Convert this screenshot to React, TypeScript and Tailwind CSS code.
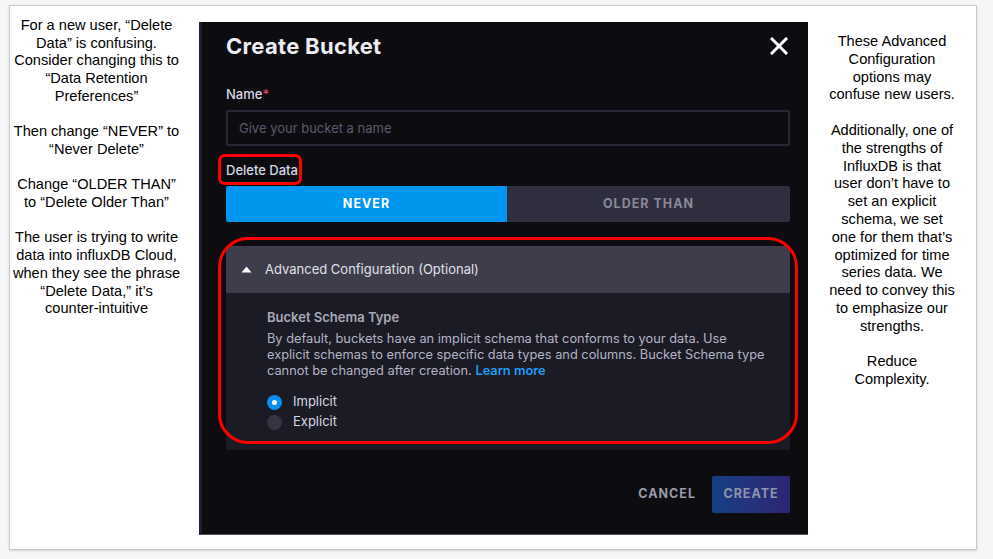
import React from "react";

const noteFont = { fontFamily: '"Liberation Sans", Arial, sans-serif' };
const uiFont = { fontFamily: 'Inter, "Noto Sans", sans-serif' };

function CloseIcon() {
  return (
    <svg width="18" height="18" viewBox="0 0 18 18">
      <path d="M2 2 L16 16 M16 2 L2 16" stroke="#ffffff" strokeWidth="3" strokeLinecap="square" />
    </svg>
  );
}

function CaretUp() {
  return (
    <svg width="11" height="7" viewBox="0 0 11 7">
      <path d="M5.5 0.5 L10.5 6.5 L0.5 6.5 Z" fill="#ffffff" />
    </svg>
  );
}

function Radio({ checked, label }: { checked: boolean; label: string }) {
  return (
    <div className="flex items-center h-[20px]">
      {checked ? (
        <span className="w-[15px] h-[15px] rounded-full bg-[#0a8ff0] flex items-center justify-center">
          <span className="w-[5px] h-[5px] rounded-full bg-white" />
        </span>
      ) : (
        <span className="w-[15px] h-[15px] rounded-full bg-[#353442]" />
      )}
      <span className="ml-[11px] text-[13px] text-[#d8d8e2]">{label}</span>
    </div>
  );
}

function CreateBucketModal() {
  return (
    <div
      className="w-[609px] h-[513px] mt-[16px] bg-[#0c0c11] border-l-[3px] border-l-[#231a36] border-b border-b-[#55555f] pl-[24px] pr-[18px] flex flex-col"
      style={uiFont}
    >
      <div className="h-[48px] flex items-center justify-between">
        <h1 className="text-[22px] font-bold text-[#ececf2] tracking-[0.3px]">Create Bucket</h1>
        <div className="mr-[2px]">
          <CloseIcon />
        </div>
      </div>

      <div className="mt-[16px] h-[16px] text-[13px] leading-[16px] text-[#d7d7e0] font-medium">
        Name<span className="text-[#e0455a]">*</span>
      </div>
      <div className="mt-[8px] h-[36px] border-2 border-[#272634] rounded-[2px] flex items-center pl-[11px] pt-[1px] text-[13px] text-[#5c5b6c]">
        Give your bucket a name
      </div>

      <div className="relative mt-[16px] h-[16px] text-[13px] leading-[16px] text-[#d7d7e0] font-medium">
        Delete Data
        <div className="absolute -left-[8px] -top-[8px] w-[84px] h-[31px] border-[3px] border-[#ff0000] rounded-[7px]" />
      </div>
      <div className="mt-[8px] h-[36px] flex text-[12.5px] font-bold tracking-[1px]">
        <div className="w-[281px] bg-[#0096ee] text-white flex items-center justify-center rounded-l-[2px]">
          NEVER
        </div>
        <div className="flex-1 bg-[#2f2e3e] text-[#8a8999] flex items-center justify-center rounded-r-[2px]">
          OLDER THAN
        </div>
      </div>

      <div className="relative mt-[24px]">
        <div className="h-[47px] bg-[#3e3d4c] flex items-center pl-[15px]">
          <CaretUp />
          <span className="ml-[13px] text-[13px] text-[#e0e0e8]">Advanced Configuration (Optional)</span>
        </div>
        <div className="bg-[#1b1b26] pl-[41px] pt-[16px] pb-[18px]">
          <div className="h-[16px] leading-[16px] text-[13px] font-semibold text-[#a9a9b8]">Bucket Schema Type</div>
          <p className="mt-[6px] text-[12.8px] leading-[16px] text-[#b4b4c4]">
            By default, buckets have an implicit schema that conforms to your data. Use
            <br />
            explicit schemas to enforce specific data types and columns. Bucket Schema type
            <br />
            cannot be changed after creation.{" "}
            <span className="text-[#1c9cf0] font-semibold">Learn more</span>
          </p>
          <div className="mt-[13px] flex flex-col">
            <Radio checked label="Implicit" />
            <Radio checked={false} label="Explicit" />
          </div>
        </div>
        <div className="absolute -left-[8px] -top-[9px] w-[580px] h-[207px] border-[3px] border-[#ff0000] rounded-[30px]" />
      </div>

      <div className="mt-[26px] flex justify-end items-center">
        <span className="text-[12.5px] font-bold tracking-[1px] text-[#9a9aa8] mr-[16px]">CANCEL</span>
        <div className="w-[78px] h-[37px] rounded-[2px] bg-gradient-to-r from-[#143f84] to-[#2c2574] flex items-center justify-center text-[12.5px] font-bold tracking-[1px] text-[#8e94aa]">
          CREATE
        </div>
      </div>
    </div>
  );
}

export default function App() {
  return (
    <div className="w-[993px] h-[559px] bg-[#f5f6f8] pt-[5px] pl-[9px]">
      <div className="w-[968px] h-[545px] bg-white border border-[#c9c9c9] shadow-sm flex">
        <div className="w-[189px] pr-[16px] pt-[11px] text-center text-[14.6px] leading-[17.7px] text-black" style={noteFont}>
          <p>
            For a new user, “Delete
            <br />
            Data” is confusing.
            <br />
            Consider changing this to
            <br />
            “Data Retention
            <br />
            Preferences”
          </p>
          <p className="mt-[17.7px]">
            Then change “NEVER” to
            <br />
            “Never Delete”
          </p>
          <p className="mt-[17.7px]">
            Change “OLDER THAN”
            <br />
            to “Delete Older Than”
          </p>
          <p className="mt-[17.7px]">
            The user is trying to write
            <br />
            data into influxDB Cloud,
            <br />
            when they see the phrase
            <br />
            “Delete Data,” it’s
            <br />
            counter-intuitive
          </p>
        </div>

        <CreateBucketModal />

        <div className="flex-1 pt-[27px] text-center text-[14.6px] leading-[17.8px] text-black" style={noteFont}>
          <p>
            These Advanced
            <br />
            Configuration
            <br />
            options may
            <br />
            confuse new users.
          </p>
          <p className="mt-[17.8px]">
            Additionally, one of
            <br />
            the strengths of
            <br />
            InfluxDB is that
            <br />
            user don’t have to
            <br />
            set an explicit
            <br />
            schema, we set
            <br />
            one for them that’s
            <br />
            optimized for time
            <br />
            series data. We
            <br />
            need to convey this
            <br />
            to emphasize our
            <br />
            strengths.
          </p>
          <p className="mt-[17.8px]">
            Reduce
            <br />
            Complexity.
          </p>
        </div>
      </div>
    </div>
  );
}
